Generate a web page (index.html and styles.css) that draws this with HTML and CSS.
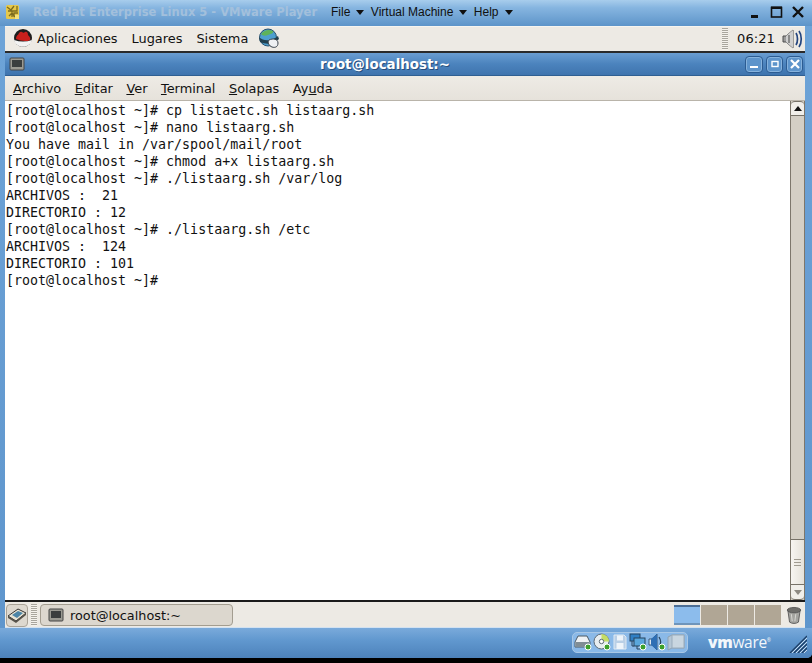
FILE: index.html
```html
<!DOCTYPE html>
<html lang="es">
<head>
<meta charset="utf-8">
<title>Red Hat Enterprise Linux 5 - VMware Player</title>
<link rel="stylesheet" href="styles.css">
</head>
<body>
<div class="player">
  <header class="player-bar">
    <svg class="vm-logo" width="16" height="16" viewBox="0 0 16 16"><rect x="1" y="1" width="13" height="14" rx="1.500" fill="#e6c84a"/><path d="M2 3l4 3 3-4M12 2v5H7v6M3 7h4M4 12l3-3 3 4M13 9h-4v4" stroke="#7d6c1e" stroke-width="1.300" fill="none"/><rect x="10" y="11" width="4" height="4" fill="#f3e07a"/></svg>
    <span class="player-title">Red Hat Enterprise Linux 5 - VMware Player</span>
    <nav class="player-menu">
      <span>File</span><i class="caret"></i>
      <span>Virtual Machine</span><i class="caret"></i>
      <span>Help</span><i class="caret"></i>
    </nav>
    <div class="player-controls">
      <svg width="14" height="14" viewBox="0 0 14 14"><rect x="2" y="10" width="7" height="3" fill="#111"/></svg>
      <svg width="14" height="14" viewBox="0 0 14 14"><rect x="1.500" y="2.500" width="10" height="9.500" fill="none" stroke="#111" stroke-width="1.600"/><rect x="1" y="1.500" width="11" height="2.500" fill="#111"/></svg>
      <svg width="14" height="14" viewBox="0 0 14 14"><path d="M2 2l10 10M12 2L2 12" stroke="#111" stroke-width="2.400"/></svg>
    </div>
  </header>

  <main class="guest">
    <div class="gnome-panel">
      <svg class="hat" width="20" height="19" viewBox="0 0 20 19"><circle cx="10" cy="9" r="9" fill="#1d1d1d"/><path d="M1 11c2 9 16 9 18 0-6 2-12 2-18 0z" fill="#f3f3f3"/><path d="M3 10c0-2 1-4 2-4 1-2 2-4 4-3 1 1 2 1 3 0 2-1 3 1 3 3 1 1 3 3 2 5-1 1-3 1-5 1-3 0-6-1-9-2z" fill="#c8201c"/></svg>
      <span class="panel-item">Aplicaciones</span>
      <span class="panel-item">Lugares</span>
      <span class="panel-item">Sistema</span>
      <svg class="globe" width="22" height="21" viewBox="0 0 22 21"><circle cx="10" cy="9.500" r="8.500" fill="#4d9fcf" stroke="#27506e"/><path d="M3 6c3-4 8-5 12-3 1 2-2 3-5 4C7 8 5 8 3 6z" fill="#5fb35a"/><path d="M1 9c5 5 13 4 19-1l1 3c-5 5-12 6-19 3z" fill="#23414f"/><path d="M11 12c4-2 9-1 9 3s-3 5-6 4-5-5-3-7z" fill="#eef0f2" stroke="#39434c"/></svg>
      <div class="panel-right">
        <span class="handle"></span>
        <span class="clock">06:21</span>
        <svg width="21" height="20" viewBox="0 0 21 20"><path d="M1 7h3l7-6v18l-7-6H1z" fill="#9c9c9c" stroke="#4f4f4f"/><path d="M4 7l7-6v18l-7-6z" fill="#cfcfcf"/><path d="M7 6v8" stroke="#8a8a8a" stroke-width="2"/><path d="M14 4c2 3 2 9 0 12M17 2c3 4 3 12 0 16" fill="none" stroke="#24457f" stroke-width="1.700"/></svg>
      </div>
    </div>

    <div class="term-window">
      <div class="term-title">
        <svg class="term-icon" width="16" height="14" viewBox="0 0 16 14"><rect x="1" y="1" width="14" height="12" rx="1" fill="#9a9a92" stroke="#444"/><rect x="3" y="3" width="10" height="7" fill="#3a3e3e"/></svg>
        <span class="term-name">root@localhost:~</span>
        <div class="wm-buttons">
          <span class="wm-btn wm-wide"><svg width="10" height="10" viewBox="0 0 10 10"><rect x="1" y="7" width="8" height="2" fill="#fff"/></svg></span>
          <span class="wm-btn"><svg width="10" height="10" viewBox="0 0 10 10"><rect x="2" y="2.500" width="6" height="5" fill="none" stroke="#fff" stroke-width="1.400"/></svg></span>
          <span class="wm-btn"><svg width="10" height="10" viewBox="0 0 10 10"><path d="M1 1l8 8M9 1l-8 8" stroke="#fff" stroke-width="2.200"/></svg></span>
        </div>
      </div>
      <div class="term-menu">
        <span><u>A</u>rchivo</span>
        <span><u>E</u>ditar</span>
        <span><u>V</u>er</span>
        <span><u>T</u>erminal</span>
        <span><u>S</u>olapas</span>
        <span>Ay<u>u</u>da</span>
      </div>
      <div class="term-body">
        <pre class="term-text">[root@localhost ~]# cp listaetc.sh listaarg.sh
[root@localhost ~]# nano listaarg.sh
You have mail in /var/spool/mail/root
[root@localhost ~]# chmod a+x listaarg.sh
[root@localhost ~]# ./listaarg.sh /var/log
ARCHIVOS :  21
DIRECTORIO : 12
[root@localhost ~]# ./listaarg.sh /etc
ARCHIVOS :  124
DIRECTORIO : 101
[root@localhost ~]#</pre>
        <div class="scrollbar">
          <span class="sb-btn sb-up"><i class="sb-arrow-up"></i></span>
          <span class="sb-trough"></span>
          <span class="sb-thumb"><i></i><i></i><i></i></span>
          <span class="sb-btn sb-down"><i class="sb-arrow-down"></i></span>
        </div>
      </div>
    </div>

    <div class="gnome-taskbar">
      <span class="desktop-btn">
        <svg width="20" height="18" viewBox="0 0 20 18"><path d="M1 10l10-7 8 4-10 8z" fill="#e9e4d4" stroke="#333"/><path d="M5 9l6-4 5 2-6 5z" fill="#4d86a8"/><path d="M1 10v2l8 5 10-8V7l-10 8z" fill="#57534a"/></svg>
      </span>
      <span class="handle"></span>
      <span class="task">
        <svg width="16" height="14" viewBox="0 0 16 14"><rect x="1" y="1" width="14" height="12" rx="1" fill="#9a9a92" stroke="#444"/><rect x="3" y="3" width="10" height="7" fill="#3a3e3e"/></svg>
        root@localhost:~
      </span>
      <div class="pager">
        <span class="ws ws-active"></span>
        <span class="ws"></span>
        <span class="ws"></span>
        <span class="ws"></span>
      </div>
      <svg class="trash" width="16" height="20" viewBox="0 0 18 20"><path d="M2 4l2 14c3 2 7 2 10 0l2-14z" fill="#a4a4a0" stroke="#555"/><ellipse cx="9" cy="4.500" rx="7.500" ry="3" fill="#6d6d6a" stroke="#555"/><path d="M6 9l1 8M11 9l-1 8" stroke="#dcdcd8"/></svg>
    </div>
  </main>

  <footer class="player-foot">
    <div class="devices">
      <svg width="18" height="18" viewBox="0 0 18 18"><path d="M1 9l3-6h9l3 6v5H1z" fill="#eef1f3" stroke="#4b5a66"/><rect x="1.500" y="9" width="14" height="5" fill="#7f8d95"/><circle cx="14" cy="14" r="3" fill="#3da02c" stroke="#fff"/></svg>
      <svg width="18" height="18" viewBox="0 0 18 18"><circle cx="8.500" cy="8.500" r="7.500" fill="#e7edf0" stroke="#5c6b77"/><path d="M8.500 1a7.500 7.500 0 0 1 7.500 7.500H8.500z" fill="#c4dd66"/><circle cx="8.500" cy="8.500" r="2.200" fill="#fff" stroke="#5c6b77"/><circle cx="14" cy="14" r="3" fill="#3da02c" stroke="#fff"/></svg>
      <svg width="16" height="18" viewBox="0 0 16 18"><path d="M2 2h10l2 2v12H2z" fill="#b9cfe6" stroke="#dfe9f3"/><rect x="5" y="2.500" width="6" height="5" fill="#eef4fa"/><rect x="4.500" y="10" width="7" height="6" fill="#eef4fa"/></svg>
      <svg width="18" height="18" viewBox="0 0 18 18"><rect x="1" y="1" width="10" height="7" fill="#2f7fc4" stroke="#26445f"/><rect x="5" y="5" width="11" height="8" fill="#5aa7dc" stroke="#26445f"/><path d="M3 8v5h2M8 13v3h5" stroke="#26445f" fill="none"/><circle cx="14" cy="14" r="3" fill="#3da02c" stroke="#fff"/></svg>
      <svg width="18" height="18" viewBox="0 0 18 18"><path d="M1 6h3l5-5v16l-5-5H1z" fill="#dde6ee" stroke="#3a5a7c"/><path d="M3 6l6-5v16l-6-5z" fill="#2f6fb4"/><path d="M11 4c2 3 2 7 0 10" fill="none" stroke="#26445f" stroke-width="1.300"/><circle cx="14" cy="14" r="3" fill="#3da02c" stroke="#fff"/></svg>
      <svg width="18" height="18" viewBox="0 0 18 18"><path d="M1 4l4-2h12v13H5l-4 2z" fill="#b5c7d6" stroke="#8fa2b2"/><rect x="5" y="2" width="12" height="13" fill="#c9d6e0" stroke="#9aacbb"/></svg>
    </div>
    <span class="vmware-logo"><b>vm</b>ware<sup>®</sup></span>
    <svg class="grip" width="18" height="18" viewBox="0 0 18 18"><path d="M18 1L1 18M18 5L5 18M18 9L9 18M18 13l-5 5" stroke="#1d3f66" stroke-width="1.300"/><path d="M18 3L3 18M18 7L7 18M18 11l-7 7M18 15l-3 3" stroke="#c8dcef" stroke-width="1"/></svg>
  </footer>
</div>
</body>
</html>
```

FILE: styles.css
```css
* { box-sizing: border-box; }
html, body { margin: 0; padding: 0; background: #000; }
body { width: 812px; height: 663px; overflow: hidden; font-family: "DejaVu Sans", sans-serif; color: #111; }

.player {
  width: 812px;
  height: 658px;
  display: flex;
  flex-direction: column;
  background: linear-gradient(#6ea4d8, #5e95cc);
  border-bottom-right-radius: 5px;
}

.player-bar {
  height: 26px;
  flex: none;
  display: flex;
  align-items: center;
  padding: 0 7px 2px 5px;
  background: linear-gradient(#a8cdec 0, #86b5e0 30%, #5d94c9 100%);
}
.vm-logo { margin-right: 12px; }
.player-title {
  font: bold 11.500px "DejaVu Sans", sans-serif;
  color: #a3c0dc;
  width: 298px;
  white-space: nowrap;
}
.player-menu { display: flex; align-items: center; font: 12px "Liberation Sans", sans-serif; color: #101010; }
.caret { width: 0; height: 0; margin: 0 6.500px 0 6px; border: 4px solid transparent; border-top: 5px solid #101010; border-bottom: 0; }
.player-controls { margin-left: auto; display: flex; gap: 7px; align-items: center; }

.guest {
  margin: 0 7px 0 5px;
  width: 800px;
  height: 602px;
  flex: none;
  display: flex;
  flex-direction: column;
  background: #edeae4;
}

.gnome-panel {
  height: 27px;
  flex: none;
  display: flex;
  align-items: center;
  padding: 0 0 1px 8px;
  border-top: 1px solid #f6f4ef;
  border-bottom: 2px solid #2a2a2a;
  font-size: 12.900px;
}
.hat { margin-right: 1px; }
.panel-item { margin-left: 3px; margin-right: 11px; white-space: nowrap; }
.globe { margin-left: -1px; }
.panel-right { margin-left: auto; display: flex; align-items: center; height: 100%; padding-right: 2px; }
.handle {
  width: 6px;
  height: 22px;
  background: repeating-linear-gradient(#a8a59d 0 1px, #f4f2ed 1px 2px);
  display: block;
}
.clock { margin: 0 7px 0 9px; font-size: 13px; letter-spacing: .1px; }

.term-window { flex: 1; display: flex; flex-direction: column; min-height: 0; }

.term-title {
  height: 23px;
  flex: none;
  position: relative;
  display: flex;
  align-items: center;
  padding: 0 2px 0 4px;
  background: linear-gradient(#6a9dd1 0, #4b83bd 50%, #3f74ae 100%);
  border-bottom: 1px solid #2f5f92;
}
.term-name {
  position: absolute;
  left: 0; right: 40px;
  text-align: center;
  color: #fff;
  font: bold 13.400px "DejaVu Sans", sans-serif;
  text-shadow: 1px 1px 0 #274e7c;
}
.wm-buttons { margin-left: auto; display: flex; gap: 3px; }
.wm-btn {
  width: 17px;
  height: 17px;
  display: flex;
  align-items: center;
  justify-content: center;
  border: 1px solid #2c5c92;
  border-radius: 4px;
  background: #5d94cb;
  box-shadow: inset 0 0 0 1px #86b2dc;
}
.wm-wide { width: 18px; }

.term-menu {
  height: 25px;
  flex: none;
  display: flex;
  align-items: center;
  gap: 13.500px;
  padding-left: 8px;
  font-size: 12.900px;
  background: linear-gradient(#eeebe5, #e6e2db);
  border-bottom: 1px solid #b9b4aa;
}
.term-menu span { white-space: nowrap; }

.term-body {
  flex: 1;
  min-height: 0;
  display: flex;
  background: #fff;
  border-bottom: 2px solid #1b1b1b;
}
.term-text {
  flex: 1;
  margin: 0;
  padding: 1px 0 0 1px;
  font: 13.300px/17px "DejaVu Sans Mono", monospace;
  color: #111;
}

.scrollbar {
  width: 15px;
  flex: none;
  display: flex;
  flex-direction: column;
  background: #d4cfc5;
  border-left: 1px solid #7d776c;
  border-right: 1px solid #7d776c;
}
.sb-btn {
  height: 15px;
  flex: none;
  display: flex;
  align-items: center;
  justify-content: center;
  background: #f1efea;
  border-top: 1px solid #777268;
  border-bottom: 1px solid #777268;
}
.sb-up { border-radius: 4px 4px 0 0; }
.sb-down { border-radius: 0 0 4px 4px; border-top: 0; }
.sb-arrow-up { border: 4px solid transparent; border-bottom: 5px solid #111; border-top: 0; }
.sb-arrow-down { border: 4px solid transparent; border-top: 5px solid #8e8a82; border-bottom: 0; }
.sb-trough { flex: 1; }
.sb-thumb {
  height: 46px;
  flex: none;
  display: flex;
  flex-direction: column;
  align-items: center;
  justify-content: center;
  gap: 2px;
  background: linear-gradient(90deg, #f7f5f1, #e6e2da);
  border-top: 1px solid #777268;
  border-bottom: 1px solid #777268;
}
.sb-thumb i { display: block; width: 7px; height: 1px; background: #a09b90; }

.gnome-taskbar {
  height: 26px;
  flex: none;
  display: flex;
  align-items: center;
  padding: 1px 3px 0 1px;
  border-bottom: 1px solid #d3e2f1;
}
.desktop-btn {
  width: 22px;
  height: 23px;
  display: flex;
  align-items: center;
  justify-content: center;
  background: #ddd8cf;
  border: 1px solid #a9a398;
  border-radius: 4px;
  margin-right: 3px;
}
.task {
  margin-left: 3px;
  width: 193px;
  height: 22px;
  display: flex;
  align-items: center;
  gap: 6px;
  padding-left: 7px;
  background: #dcd7ce;
  border: 1px solid #a39d90;
  border-radius: 4px;
  font-size: 12.800px;
  color: #111;
}
.pager { margin-left: auto; display: flex; gap: 1px; height: 20px; }
.ws { width: 26px; height: 20px; background: #b0a695; }
.ws-active { background: #8cbcec; border-top: 2px solid #4d6f96; border-bottom: 2px solid #6f95bb; }
.trash { margin-left: 5px; }

.player-foot {
  flex: 1;
  display: flex;
  align-items: center;
  padding: 0 0 0 572px;
  position: relative;
  background: linear-gradient(#7aaadb 0, #6198cf 40%, #4d82bb 100%);
  border-bottom-right-radius: 5px;
}
.devices {
  width: 116px;
  height: 21px;
  flex: none;
  display: flex;
  align-items: center;
  gap: 1px;
  padding: 0 1px;
  border: 1px solid #a9c8e6;
  border-radius: 5px;
  background: #8ab9e8;
  margin-bottom: 2px;
}
.devices svg { flex: none; }
.vmware-logo {
  margin-left: 20px;
  font: 15.500px "Open Sans", "DejaVu Sans", sans-serif;
  color: #f3f7fb;
  margin-bottom: 3px;
  letter-spacing: -.3px;
}
.vmware-logo b { font-weight: 800; }
.vmware-logo sup { font-size: 5px; }
.grip { position: absolute; right: 5px; bottom: 5px; }
```
